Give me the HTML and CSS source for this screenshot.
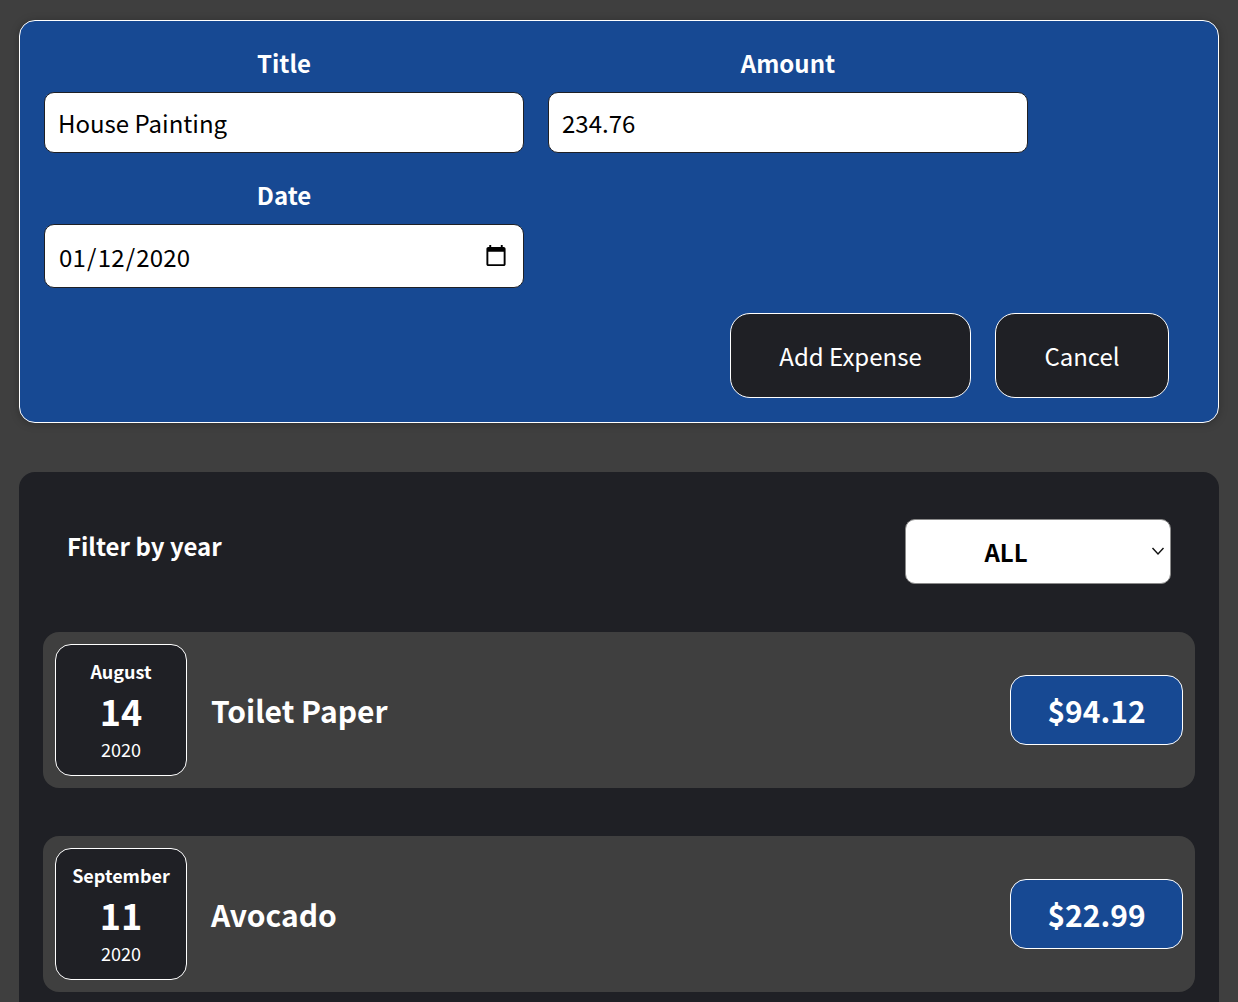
FILE: index.html
```html
<!DOCTYPE html>
<html lang="en">
<head>
    <meta charset="UTF-8">
    <meta name="viewport" content="width=device-width, initial-scale=1.0">
    <title>Expenses</title>
    <link rel="stylesheet" href="styles.css">
</head>
<body>
    <div class="page">
        <form class="new-expense">
            <div class="fields">
                <div class="field">
                    <label for="title">Title</label>
                    <input class="text-input" id="title" type="text" value="House Painting">
                </div>
                <div class="field">
                    <label for="amount">Amount</label>
                    <input class="text-input" id="amount" type="text" value="234.76">
                </div>
                <div class="field">
                    <label for="date">Date</label>
                    <input class="date-input" id="date" type="date" value="2020-01-12">
                </div>
            </div>
            <div class="actions">
                <button class="action-button add-button" type="button">Add Expense</button>
                <button class="action-button cancel-button" type="button">Cancel</button>
            </div>
        </form>

        <div class="expenses">
            <div class="filter">
                <label for="year">Filter by year</label>
                <div class="select-wrap">
                    <select class="year-select" id="year">
                        <option>ALL</option>
                        <option>2020</option>
                    </select>
                    <svg class="select-arrow" width="14" height="10" viewBox="0 0 14 10">
                        <path d="M1.5 2 L7 8 L12.5 2" fill="none" stroke="#111" stroke-width="1.4"/>
                    </svg>
                </div>
            </div>

            <div class="expense-item">
                <div class="expense-date">
                    <div class="month">August</div>
                    <div class="day">14</div>
                    <div class="year">2020</div>
                </div>
                <h2 class="expense-title">Toilet Paper</h2>
                <div class="expense-price">$94.12</div>
            </div>

            <div class="expense-item">
                <div class="expense-date">
                    <div class="month">September</div>
                    <div class="day">11</div>
                    <div class="year">2020</div>
                </div>
                <h2 class="expense-title">Avocado</h2>
                <div class="expense-price">$22.99</div>
            </div>
        </div>
    </div>
</body>
</html>
```

FILE: styles.css
```css
html, body {
    margin: 0;
    height: 1002px;
    overflow: hidden;
}
body {
    background-color: #3f3f3f;
    font-family: 'Noto Sans CJK JP', 'Noto Sans', sans-serif;
    color: white;
}
.page {
    padding: 20px 19px 0;
}
.new-expense {
    box-sizing: border-box;
    width: 1200px;
    height: 403px;
    padding: 24px 49px 24px 24px;
    background-color: #174993;
    border: 1px solid #fff;
    border-radius: 16px;
    box-shadow: 0 1px 8px rgba(0, 0, 0, 0.25);
}
.fields {
    display: grid;
    grid-template-columns: 480px 480px;
    column-gap: 24px;
    row-gap: 24px;
}
.field {
    display: flex;
    flex-direction: column;
    align-items: center;
}
.field label {
    height: 47px;
    line-height: 36px;
    font-size: 24px;
    font-weight: 700;
}
.text-input, .date-input {
    box-sizing: border-box;
    width: 100%;
    border: 1px solid #1f2025;
    border-radius: 10px;
    background-color: white;
    color: black;
    font-family: inherit;
    font-size: 24px;
    padding: 0 13px;
}
.text-input {
    height: 61px;
}
.date-input {
    height: 64px;
    letter-spacing: 0.2px;
}
.actions {
    display: flex;
    justify-content: flex-end;
    gap: 24px;
    margin-top: 25px;
}
.action-button {
    box-sizing: border-box;
    height: 85px;
    background-color: #1f2025;
    border: 1px solid #fff;
    border-radius: 20px;
    color: white;
    font-family: inherit;
    font-size: 24px;
    padding: 0;
}
.add-button {
    width: 241px;
}
.cancel-button {
    width: 174px;
}
.expenses {
    box-sizing: border-box;
    width: 1200px;
    height: 620px;
    margin-top: 49px;
    padding: 47px 24px 0;
    background-color: #1f2025;
    border-radius: 16px;
}
.filter {
    display: flex;
    justify-content: space-between;
    align-items: flex-start;
    height: 113px;
    padding: 0 24px;
}
.filter label {
    font-size: 24px;
    font-weight: 700;
    line-height: 54px;
}
.select-wrap {
    position: relative;
    height: 65px;
}
.year-select {
    appearance: none;
    box-sizing: border-box;
    width: 266px;
    height: 65px;
    padding: 0 64px 0 0;
    background-color: white;
    border: 1px solid #8a8a8a;
    border-radius: 10px;
    color: black;
    font-family: inherit;
    font-size: 24px;
    font-weight: 700;
    text-align: center;
}
.select-arrow {
    position: absolute;
    right: 6px;
    top: 27px;
}
.expense-item {
    box-sizing: border-box;
    display: flex;
    align-items: center;
    height: 156px;
    margin-bottom: 48px;
    padding: 0 12px;
    background-color: #3f3f3f;
    border-radius: 16px;
}
.expense-date {
    box-sizing: border-box;
    display: flex;
    flex-direction: column;
    align-items: center;
    justify-content: center;
    width: 132px;
    height: 132px;
    background-color: #1f2025;
    border: 1px solid #fff;
    border-radius: 16px;
}
.month {
    font-size: 18px;
    font-weight: 700;
    line-height: 26px;
}
.day {
    font-size: 36px;
    font-weight: 700;
    line-height: 52px;
}
.year {
    font-size: 18px;
    line-height: 26px;
}
.expense-title {
    flex: 1;
    margin: 0 0 0 24px;
    font-size: 30px;
    font-weight: 700;
}
.expense-price {
    box-sizing: border-box;
    width: 173px;
    height: 70px;
    background-color: #174993;
    border: 1px solid #fff;
    border-radius: 16px;
    font-size: 30px;
    font-weight: 700;
    line-height: 68px;
    text-align: center;
}
```
